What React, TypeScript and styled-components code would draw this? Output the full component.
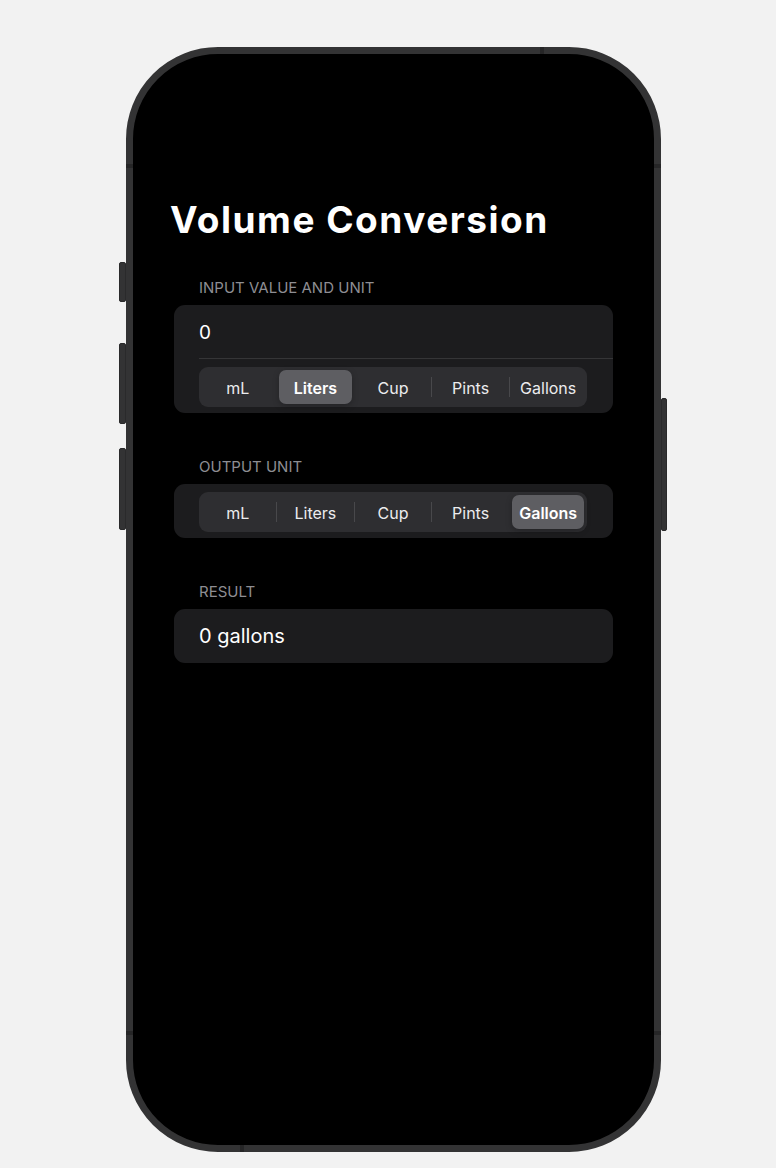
import React, { useState } from "react";
import styled, { createGlobalStyle } from "styled-components";

const GlobalStyle = createGlobalStyle`
  html, body {
    margin: 0;
    padding: 0;
    background: #f2f2f2;
    font-family: Inter, "Noto Sans", "Liberation Sans", sans-serif;
    -webkit-font-smoothing: antialiased;
  }
  * { box-sizing: border-box; }
`;

const Page = styled.div`
  width: 776px;
  height: 1168px;
  padding: 47px 0 0 126px;
  display: flex;
  align-items: flex-start;
`;

const Phone = styled.div`
  position: relative;
  width: 535px;
  height: 1105px;
  border: 7px solid #333334;
  border-radius: 92px;
  background: #000;
`;

const SideButton = styled.div<{ $side: "left" | "right"; $top: number; $height: number }>`
  position: absolute;
  ${(p) => (p.$side === "left" ? "left: -14px;" : "right: -13px;")}
  top: ${(p) => p.$top}px;
  width: ${(p) => (p.$side === "left" ? 7 : 6)}px;
  height: ${(p) => p.$height}px;
  background: #333334;
  border: 1px solid #2a2a2b;
  border-radius: 2px;
`;

const Band = styled.div<{ $pos: string }>`
  position: absolute;
  background: #262627;
  ${(p) => p.$pos}
`;

const Screen = styled.div`
  display: flex;
  flex-direction: column;
  padding: 145px 41px 0 41px;
  color: #fff;
`;

const Title = styled.h1`
  margin: 0 0 38.5px -4px;
  font-size: 37px;
  line-height: 41px;
  font-weight: 700;
  letter-spacing: 1.5px;
  color: #fff;
  white-space: nowrap;
`;

const Section = styled.section`
  display: flex;
  flex-direction: column;
  margin-bottom: 45px;
`;

const SectionLabel = styled.div`
  padding-left: 25px;
  margin-bottom: 8px;
  font-size: 15px;
  line-height: 18px;
  font-weight: 400;
  color: #8e8e93;
  text-transform: uppercase;
`;

const Card = styled.div`
  display: flex;
  flex-direction: column;
  background: #1c1c1e;
  border-radius: 11px;
  overflow: hidden;
`;

const FieldRow = styled.div`
  height: 54px;
  margin-left: 25px;
  padding-top: 3px;
  display: flex;
  align-items: center;
  border-bottom: 1px solid #353537;
  font-size: 19px;
  color: #fff;
`;

const PickerRow = styled.div`
  padding: 8.5px 26px 6px 25px;
`;

const ResultRow = styled.div`
  height: 54px;
  padding: 1px 0 0 25px;
  display: flex;
  align-items: center;
  font-size: 20px;
  color: #fff;
`;

const Track = styled.div`
  display: grid;
  grid-template-columns: repeat(5, 1fr);
  height: 39.5px;
  background: #2e2e31;
  border-radius: 9px;
`;

const Segment = styled.div<{ $divider: boolean }>`
  position: relative;
  padding: 3px 2.6px;
  display: flex;
  &::before {
    content: "";
    position: absolute;
    left: -0.5px;
    top: 9.5px;
    bottom: 9.5px;
    width: 1px;
    background: #48484b;
    opacity: ${(p) => (p.$divider ? 1 : 0)};
  }
`;

const Pill = styled.div<{ $active: boolean }>`
  flex: 1;
  display: flex;
  align-items: center;
  justify-content: center;
  padding-top: 1.5px;
  border-radius: 7px;
  background: ${(p) => (p.$active ? "#5e5e62" : "transparent")};
  box-shadow: ${(p) => (p.$active ? "0 2px 6px rgba(0,0,0,0.25)" : "none")};
  font-size: 16px;
  font-weight: ${(p) => (p.$active ? 600 : 400)};
  color: ${(p) => (p.$active ? "#fff" : "#ececee")};
`;

const units = ["mL", "Liters", "Cup", "Pints", "Gallons"];

function Segmented({ selected }: { selected: number }) {
  return (
    <Track>
      {units.map((u, i) => (
        <Segment key={u} $divider={i > 0 && i !== selected && i - 1 !== selected}>
          <Pill $active={i === selected}>{u}</Pill>
        </Segment>
      ))}
    </Track>
  );
}

export default function App() {
  const [inputUnit] = useState(1);
  const [outputUnit] = useState(4);
  return (
    <>
      <GlobalStyle />
      <Page>
        <Phone>
          <SideButton $side="left" $top={208} $height={40} />
          <SideButton $side="left" $top={289} $height={81} />
          <SideButton $side="left" $top={394} $height={82} />
          <SideButton $side="right" $top={344} $height={133} />
          <Band $pos="left: -7px; top: 110px; width: 7px; height: 4px;" />
          <Band $pos="right: -7px; top: 110px; width: 7px; height: 4px;" />
          <Band $pos="left: -7px; top: 977px; width: 7px; height: 4px;" />
          <Band $pos="right: -7px; top: 977px; width: 7px; height: 4px;" />
          <Band $pos="left: 407px; top: -7px; width: 4px; height: 7px;" />
          <Band $pos="left: 107px; bottom: -7px; width: 4px; height: 7px;" />
          <Screen>
            <Title>Volume Conversion</Title>
            <Section>
              <SectionLabel>Input value and unit</SectionLabel>
              <Card>
                <FieldRow>0</FieldRow>
                <PickerRow>
                  <Segmented selected={inputUnit} />
                </PickerRow>
              </Card>
            </Section>
            <Section>
              <SectionLabel>Output unit</SectionLabel>
              <Card>
                <PickerRow>
                  <Segmented selected={outputUnit} />
                </PickerRow>
              </Card>
            </Section>
            <Section>
              <SectionLabel>Result</SectionLabel>
              <Card>
                <ResultRow>0 gallons</ResultRow>
              </Card>
            </Section>
          </Screen>
        </Phone>
      </Page>
    </>
  );
}
